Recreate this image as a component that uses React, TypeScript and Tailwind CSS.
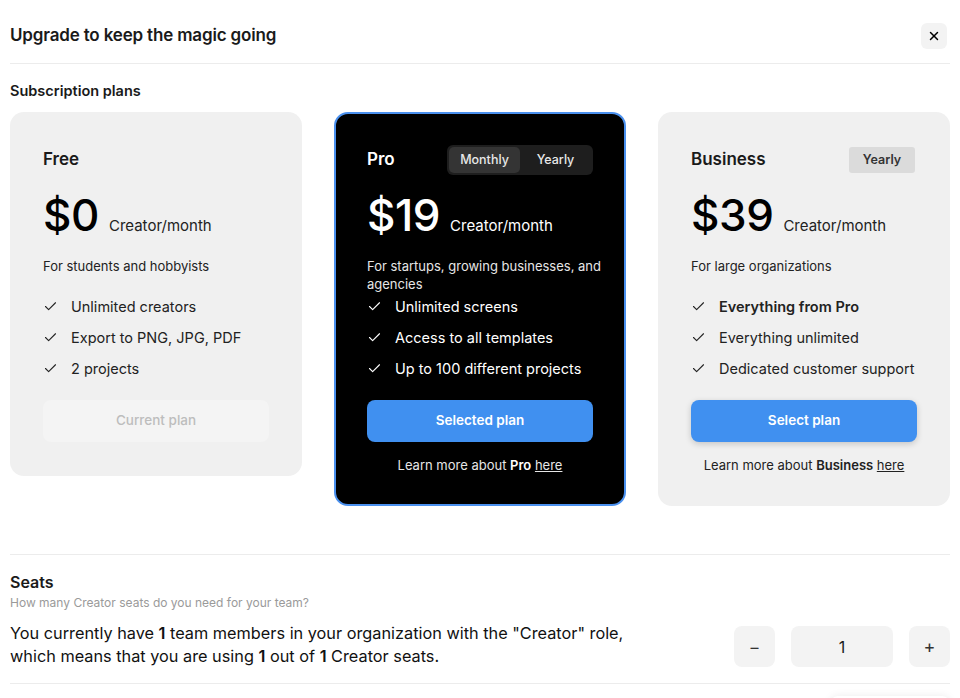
import { Check, X } from "lucide-react";

const font = { fontFamily: "Inter, 'Noto Sans', sans-serif" };

type Plan = {
  name: string;
  price: string;
  desc: React.ReactNode;
  features: { text: string; bold?: boolean }[];
};

function Feature({ text, bold, dark }: { text: string; bold?: boolean; dark?: boolean }) {
  return (
    <li className="flex items-center gap-[13px] h-[20px]">
      <Check size={15} strokeWidth={1.75} className={dark ? "text-white" : "text-[#222]"} />
      <span
        className={`text-[14.5px] ${bold ? "font-semibold" : ""} ${dark ? "text-white" : "text-[#222]"}`}
      >
        {text}
      </span>
    </li>
  );
}

function PriceRow({ price, dark }: { price: string; dark?: boolean }) {
  return (
    <div className="flex items-baseline gap-[10px] mt-[18px]">
      <span
        className={`text-[44px] leading-none font-medium tracking-[-0.01em] ${dark ? "text-white" : "text-black"}`}
      >
        {price}
      </span>
      <span className={`text-[15px] ${dark ? "text-white" : "text-[#222]"}`}>Creator/month</span>
    </div>
  );
}

export default function App() {
  const free: Plan = {
    name: "Free",
    price: "$0",
    desc: "For students and hobbyists",
    features: [{ text: "Unlimited creators" }, { text: "Export to PNG, JPG, PDF" }, { text: "2 projects" }],
  };
  const pro: Plan = {
    name: "Pro",
    price: "$19",
    desc: (
      <>
        For startups, growing businesses, and
        <br />
        agencies
      </>
    ),
    features: [
      { text: "Unlimited screens" },
      { text: "Access to all templates" },
      { text: "Up to 100 different projects" },
    ],
  };
  const business: Plan = {
    name: "Business",
    price: "$39",
    desc: "For large organizations",
    features: [
      { text: "Everything from Pro", bold: true },
      { text: "Everything unlimited" },
      { text: "Dedicated customer support" },
    ],
  };

  return (
    <div style={font} className="w-[960px] h-[698px] overflow-hidden bg-white px-[10px] text-[#1a1a1a]">
      {/* Header */}
      <div className="flex items-center justify-between h-[64px] pt-[8px] border-b border-[#ececec]">
        <h1 className="text-[17px] font-semibold tracking-[-0.01em] mt-[1px]">Upgrade to keep the magic going</h1>
        <button className="w-[26px] h-[26px] mr-[3px] rounded-md bg-[#f3f3f3] flex items-center justify-center">
          <X size={14} strokeWidth={2.5} className="text-black" />
        </button>
      </div>

      <h2 className="mt-[17px] text-[14.5px] leading-[20px] font-semibold">Subscription plans</h2>

      {/* Plans */}
      <div className="grid grid-cols-3 gap-8 items-start mt-[11px]">
        {/* Free */}
        <div className="rounded-[14px] border-2 border-transparent bg-[#f0f0f0] px-[31px] pt-[31px] pb-[32px]">
          <div className="h-[30px] flex items-center">
            <span className="text-[17px] font-semibold">{free.name}</span>
          </div>
          <PriceRow price={free.price} />
          <p className="mt-[19px] h-[36px] text-[13px] leading-[18px] text-[#222]">{free.desc}</p>
          <ul className="mt-[4px] flex flex-col gap-[11px]">
            {free.features.map((f) => (
              <Feature key={f.text} text={f.text} />
            ))}
          </ul>
          <button className="mt-[21px] w-full h-[42px] rounded-lg bg-[#f4f4f4] text-[13.5px] font-medium text-[#bdbdbd]">
            Current plan
          </button>
        </div>

        {/* Pro */}
        <div className="rounded-[14px] border-2 border-[#4a90ee] bg-black px-[31px] pt-[31px] pb-[30px]">
          <div className="h-[30px] flex items-center justify-between">
            <span className="text-[17px] font-semibold text-white">{pro.name}</span>
            <div className="flex h-[30px] w-[146px] rounded-md bg-[#1e1e1e] p-[2px]">
              <span className="flex-1 flex items-center justify-center rounded-[5px] bg-[#343434] text-[12.5px] font-medium text-[#e8e8e8]">
                Monthly
              </span>
              <span className="flex-1 flex items-center justify-center text-[12.5px] font-medium text-[#e8e8e8]">
                Yearly
              </span>
            </div>
          </div>
          <PriceRow price={pro.price} dark />
          <p className="mt-[19px] h-[36px] text-[13px] leading-[18px] text-[#e6e6e6] whitespace-nowrap">
            {pro.desc}
          </p>
          <ul className="mt-[4px] flex flex-col gap-[11px]">
            {pro.features.map((f) => (
              <Feature key={f.text} text={f.text} dark />
            ))}
          </ul>
          <button className="mt-[21px] w-full h-[42px] rounded-lg bg-[#4090f0] text-[13.5px] font-semibold text-white">
            Selected plan
          </button>
          <p className="mt-[14px] text-center text-[13px] leading-[18px] text-[#e6e6e6]">
            Learn more about <span className="font-semibold text-white">Pro</span>{" "}
            <span className="underline">here</span>
          </p>
        </div>

        {/* Business */}
        <div className="rounded-[14px] border-2 border-transparent bg-[#f0f0f0] px-[31px] pt-[31px] pb-[30px]">
          <div className="h-[30px] flex items-center justify-between">
            <span className="text-[17px] font-semibold">{business.name}</span>
            <span className="w-[66px] h-[26px] mr-[2px] rounded-[3px] bg-[#dbdbdb] flex items-center justify-center text-[12.5px] font-semibold text-[#333]">
              Yearly
            </span>
          </div>
          <PriceRow price={business.price} />
          <p className="mt-[19px] h-[36px] text-[13px] leading-[18px] text-[#222]">{business.desc}</p>
          <ul className="mt-[4px] flex flex-col gap-[11px]">
            {business.features.map((f) => (
              <Feature key={f.text} text={f.text} bold={f.bold} />
            ))}
          </ul>
          <button className="mt-[21px] w-full h-[42px] rounded-lg bg-[#4090f0] text-[13.5px] font-semibold text-white shadow-[0_2px_6px_rgba(0,0,0,0.18)]">
            Select plan
          </button>
          <p className="mt-[14px] text-center text-[13px] leading-[18px] text-[#222]">
            Learn more about <span className="font-semibold">Business</span>{" "}
            <span className="underline">here</span>
          </p>
        </div>
      </div>

      {/* Seats */}
      <div className="mt-[48px] border-t border-b border-[#ececec] pt-[16px] pb-[15px]">
        <h3 className="text-[16px] leading-[22px] font-semibold">Seats</h3>
        <p className="mt-[2px] text-[12px] leading-[16px] text-[#9a9a9a]">
          How many Creator seats do you need for your team?
        </p>
        <div className="mt-[11px] flex items-center justify-between">
          <p className="text-[16.3px] leading-[23px] text-[#111]">
            You currently have <span className="font-semibold">1</span> team members in your organization with
            the "Creator" role,
            <br />
            which means that you are using <span className="font-semibold">1</span> out of{" "}
            <span className="font-semibold">1</span> Creator seats.
          </p>
          <div className="flex items-center gap-4 mt-[4px]">
            <button className="w-[41px] h-[41px] rounded-lg bg-[#f3f3f3] text-[16px] text-[#333]">–</button>
            <div className="w-[102px] h-[41px] rounded-lg bg-[#f3f3f3] flex items-center justify-center text-[16px]">
              1
            </div>
            <button className="w-[41px] h-[41px] rounded-lg bg-[#f3f3f3] text-[18px] text-[#333]">+</button>
          </div>
        </div>
      </div>

      <div className="flex justify-end mt-[12px]">
        <div className="w-[120px] h-[40px] rounded-lg bg-white shadow-[0_0_8px_rgba(0,0,0,0.08)]" />
      </div>
    </div>
  );
}
